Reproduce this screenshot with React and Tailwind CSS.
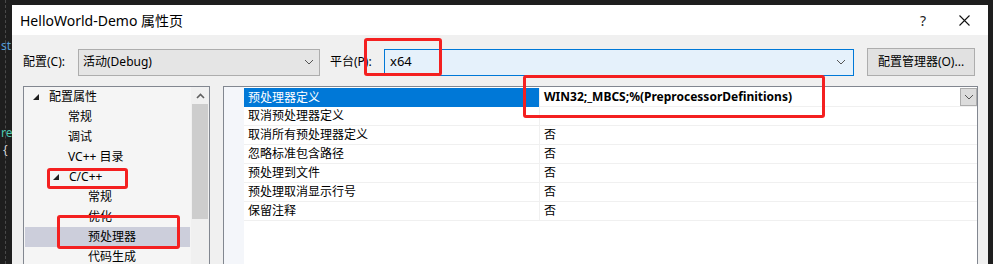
import React from 'react';

const font = "font-['Noto_Sans','Noto_Sans_CJK_SC',sans-serif]";

function Chevron({ className = '' }) {
  return (
    <svg width="10" height="6" viewBox="0 0 10 6" className={className}>
      <polyline points="1,1 5,5 9,1" fill="none" stroke="#555" strokeWidth="1" />
    </svg>
  );
}

function Tri() {
  return (
    <svg width="6" height="6" viewBox="0 0 6 6">
      <polygon points="6,0 6,6 0,6" fill="#1e1e1e" />
    </svg>
  );
}

const tree = [
  { label: '配置属性', tri: true, indent: 'pl-[9px]' },
  { label: '常规', indent: 'pl-[44px]' },
  { label: '调试', indent: 'pl-[44px]' },
  { label: 'VC++ 目录', indent: 'pl-[44px]' },
  { label: 'C/C++', tri: true, indent: 'pl-[29px]' },
  { label: '常规', indent: 'pl-[64px]' },
  { label: '优化', indent: 'pl-[64px]' },
  { label: '预处理器', indent: 'pl-[64px]', selected: true },
  { label: '代码生成', indent: 'pl-[64px]' },
];

const props = [
  { name: '预处理器定义', value: 'WIN32;_MBCS;%(PreprocessorDefinitions)', selected: true },
  { name: '取消预处理器定义', value: '' },
  { name: '取消所有预处理器定义', value: '否' },
  { name: '忽略标准包含路径', value: '否' },
  { name: '预处理到文件', value: '否' },
  { name: '预处理取消显示行号', value: '否' },
  { name: '保留注释', value: '否' },
];

export default function App() {
  return (
    <div className={`relative w-[993px] h-[264px] overflow-hidden bg-[#1e1e1e] flex ${font} text-[12px] text-black`}>
      {/* editor strip behind the dialog */}
      <div className="w-[12px] h-full flex flex-col pl-[5px]">
        <div className="h-full border-l border-dashed border-[#4a4a4a] flex flex-col text-[12px] leading-none">
          <span className="mt-[40px] -ml-[5px] text-[#569cd6]">st</span>
          <span className="mt-[75px] -ml-[5px] text-[#4ec9b0]">re</span>
          <span className="mt-[5px] -ml-[3px] text-[#d4d4d4]">{'{'}</span>
        </div>
      </div>

      <div className="mt-[5px] w-[976px] h-[259px] flex flex-col bg-[#f0f0f0]">
        {/* title bar */}
        <div className="h-[30px] bg-white flex items-center pl-[8px] shrink-0">
          <span className="text-[14px] text-black">HelloWorld-Demo 属性页</span>
          <span className="ml-auto text-[14px] text-[#222] mr-[33px]">?</span>
          <svg width="11" height="11" viewBox="0 0 11 11" className="mr-[18px]">
            <path d="M0.5 0.5 L10.5 10.5 M10.5 0.5 L0.5 10.5" stroke="#111" strokeWidth="1.1" />
          </svg>
        </div>

        {/* config row */}
        <div className="mt-[13px] h-[28px] flex items-center pl-[11px] shrink-0">
          <span className="w-[55px]">配置(C):</span>
          <div className="w-[242px] h-[27px] border border-[#adadad] bg-[#e5e5e5] flex items-center pl-[4px] pr-[5px]">
            <span className="text-[12px]">活动(Debug)</span>
            <Chevron className="ml-auto" />
          </div>
          <span className="ml-[10px] w-[54px]">平台(P):</span>
          <div className="w-[470px] h-[27px] border border-[#0078d7] bg-[#e5f1fb] flex items-center pl-[5px] pr-[7px]">
            <span className="text-[13px]">x64</span>
            <Chevron className="ml-auto" />
          </div>
          <div className="ml-[13px] w-[108px] h-[28px] border border-[#adadad] bg-[#e1e1e1] flex items-center justify-center">
            配置管理器(O)...
          </div>
        </div>

        {/* panels */}
        <div className="mt-[10px] flex flex-1 pl-[11px]">
          {/* tree */}
          <div className="w-[187px] border-t border-l border-r border-[#828790] bg-[#f5f5f5] flex">
            <div className="w-[166px] flex flex-col">
              {tree.map((t, i) => (
                <div
                  key={i}
                  className={`h-[20px] flex items-center ${t.indent} ${t.selected ? 'bg-[#cccedb] ml-[1px]' : ''}`}
                >
                  {t.tri && (
                    <span className="w-[16px] flex items-center">
                      <Tri />
                    </span>
                  )}
                  <span className={t.selected ? '-ml-[1px]' : ''}>{t.label}</span>
                </div>
              ))}
            </div>
            <div className="w-[18px] ml-auto flex flex-col bg-[#f0f0f0]">
              <div className="h-[17px] flex items-center justify-center">
                <svg width="9" height="6" viewBox="0 0 9 6">
                  <polyline points="1,5 4.5,1.5 8,5" fill="none" stroke="#606060" strokeWidth="1.6" />
                </svg>
              </div>
              <div className="mx-[1px] h-[115px] bg-[#cdcdcd]" />
            </div>
          </div>

          {/* property grid */}
          <div className="ml-[13px] w-[755px] border-t border-l border-r border-[#828790] bg-white flex">
            <div className="w-[20px] bg-[#f4f6fa]" />
            <div className="flex-1 flex flex-col pt-[1px]">
              {props.map((p, i) => (
                <div key={i} className="h-[19px] flex">
                  <div
                    className={`w-[295px] pl-[4px] flex items-center ${
                      p.selected ? 'bg-[#0078d7] text-white' : 'border-b border-[#f0f0f0]'
                    }`}
                  >
                    {p.name}
                  </div>
                  <div className="flex-1 flex items-center border-l border-b border-[#f0f0f0] pl-[4px]">
                    <span className={p.selected ? 'font-bold' : ''}>{p.value}</span>
                    {p.selected && (
                      <div className="ml-auto w-[17px] h-[18px] border border-[#adadad] bg-[#dcdcdc] flex items-center justify-center">
                        <Chevron />
                      </div>
                    )}
                  </div>
                </div>
              ))}
            </div>
          </div>
        </div>
      </div>

      {/* red annotation boxes */}
      <div className="absolute left-[364px] top-[38px] w-[78px] h-[38px] border-[3px] border-[#f42020] rounded-[3px]" />
      <div className="absolute left-[523px] top-[75px] w-[302px] h-[43px] border-[3px] border-[#f42020] rounded-[3px]" />
      <div className="absolute left-[47px] top-[168px] w-[81px] h-[21px] border-[3px] border-[#f42020] rounded-[3px]" />
      <div className="absolute left-[57px] top-[215px] w-[123px] h-[34px] border-[3px] border-[#f42020] rounded-[3px]" />
    </div>
  );
}
